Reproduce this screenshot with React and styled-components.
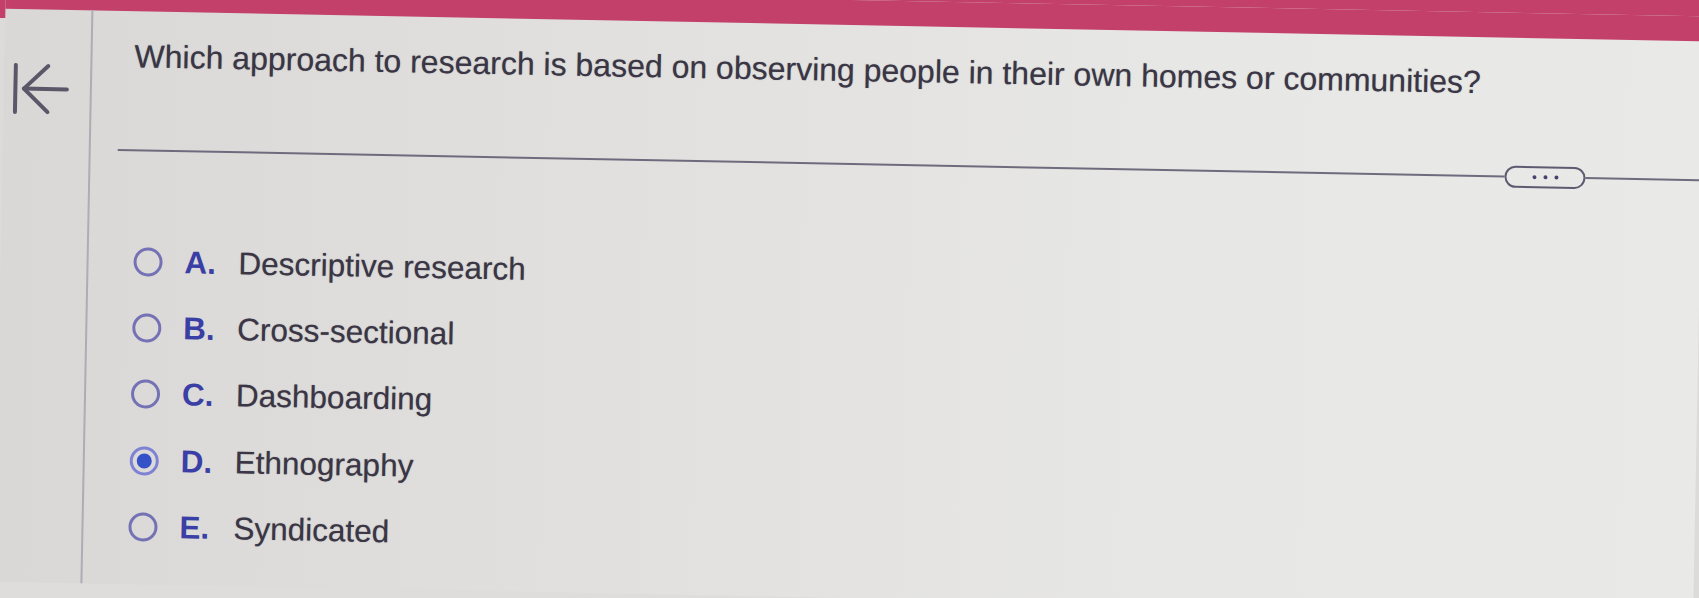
import React from "react";
import styled, { createGlobalStyle } from "styled-components";

const GlobalStyle = createGlobalStyle`
    html {
        background: linear-gradient(to bottom, #c2406a 0, #c2406a 18px, #dcdbd9 18px) no-repeat, #dcdbd9;
        overflow: hidden;
    }
    body {
        margin: 0;
        padding: 0;
        overflow: hidden;
        background: transparent;
        font-family: "Liberation Sans", Arial, sans-serif;
    }
`;

const options = [
    { id: "A", label: "Descriptive research" },
    { id: "B", label: "Cross-sectional" },
    { id: "C", label: "Dashboarding" },
    { id: "D", label: "Ethnography", selected: true },
    { id: "E", label: "Syndicated" },
];

const App = () => {
    return (
    <>
        <GlobalStyle />
        {/* the reference is a photo of a screen, taken slightly tilted */}
        <Screen>
            <TopBar />
            <Body>
                <SidePanel>
                    <BackButton aria-label="Back">
                        <svg width="57" height="51" viewBox="0 0 57 51" fill="none">
                            <g stroke="#5b5769" strokeWidth="4" strokeLinecap="round" strokeLinejoin="round">
                                <line x1="2.5" y1="2" x2="2.5" y2="49" />
                                <line x1="11" y1="25.5" x2="54" y2="25.5" />
                                <polyline points="35,2.5 11,25.5 35,48.5" />
                            </g>
                        </svg>
                    </BackButton>
                </SidePanel>
                <Main>
                    <Question>
                        Which approach to research is based on observing people in their own homes or communities?
                    </Question>
                    <DividerRow>
                        <Rule />
                        <MorePill aria-label="More">
                            <Dot />
                            <Dot />
                            <Dot />
                        </MorePill>
                        <Rule $width="116px" />
                    </DividerRow>
                    <OptionList>
                        {options.map((opt) => (
                            <OptionRow key={opt.id}>
                                <Radio $selected={opt.selected} />
                                <Letter>{opt.id}.</Letter>
                                <Label>{opt.label}</Label>
                            </OptionRow>
                        ))}
                    </OptionList>
                </Main>
            </Body>
        </Screen>
    </>
    );
};

const Screen = styled.div`
    width: 1699px;
    height: 598px;
    display: flex;
    flex-direction: column;
    transform: rotate(1.1deg);
    transform-origin: 849px 299px;
    background: linear-gradient(90deg, #d9d8d6 0%, #e1e0de 35%, #e7e7e5 70%, #e9e9e7 100%);
    box-shadow: 0 24px 0 0 #dedddb;
`;

const TopBar = styled.div`
    height: 25px;
    flex-shrink: 0;
    background: #c2406a;
`;

const Body = styled.div`
    display: flex;
    flex: 1;
    min-height: 0;
`;

const SidePanel = styled.div`
    width: 88px;
    flex-shrink: 0;
    border-right: 2px solid #aeacb4;
    padding: 54px 0 0 9px;
    box-sizing: border-box;
`;

const BackButton = styled.div`
    width: 57px;
    height: 51px;
    display: flex;
`;

const Main = styled.div`
    flex: 1;
    padding-left: 27px;
    display: flex;
    flex-direction: column;
`;

const Question = styled.div`
    margin-top: 27px;
    padding-left: 15px;
    font-size: 32px;
    line-height: 37px;
    color: #3a3645;
    text-shadow: 0 0 1px rgba(58, 54, 69, 0.55);
    white-space: nowrap;
`;

const DividerRow = styled.div`
    margin-top: 64px;
    height: 22px;
    display: flex;
    align-items: center;
`;

const Rule = styled.div`
    height: 2px;
    background: #6f6b7d;
    flex: ${(p) => (p.$width ? `0 0 ${p.$width}` : "1")};
`;

const MorePill = styled.div`
    width: 81px;
    height: 22px;
    box-sizing: border-box;
    border: 2.5px solid #5f5a70;
    border-radius: 11px;
    display: flex;
    align-items: center;
    justify-content: center;
    gap: 7px;
`;

const Dot = styled.span`
    width: 4px;
    height: 4px;
    border-radius: 50%;
    background: #48446e;
`;

const OptionList = styled.div`
    margin-top: 80px;
    padding-left: 18px;
    display: flex;
    flex-direction: column;
    gap: 26.4px;
`;

const OptionRow = styled.div`
    height: 40px;
    display: flex;
    align-items: center;
`;

const Radio = styled.span`
    width: 29px;
    height: 29px;
    flex-shrink: 0;
    box-sizing: border-box;
    border-radius: 50%;
    border: 3px solid ${(p) => (p.$selected ? "#7f82d4" : "#7471b5")};
    display: flex;
    align-items: center;
    justify-content: center;

    &::after {
        content: "";
        display: ${(p) => (p.$selected ? "block" : "none")};
        width: 15px;
        height: 15px;
        border-radius: 50%;
        background: #3552c9;
    }
`;

const Letter = styled.span`
    width: 54px;
    margin-left: 22px;
    flex-shrink: 0;
    font-size: 31.5px;
    font-weight: bold;
    color: #3a3fa6;
`;

const Label = styled.span`
    font-size: 31.5px;
    color: #3a3645;
    text-shadow: 0 0 1px rgba(58, 54, 69, 0.55);
    white-space: nowrap;
`;

export default App;
